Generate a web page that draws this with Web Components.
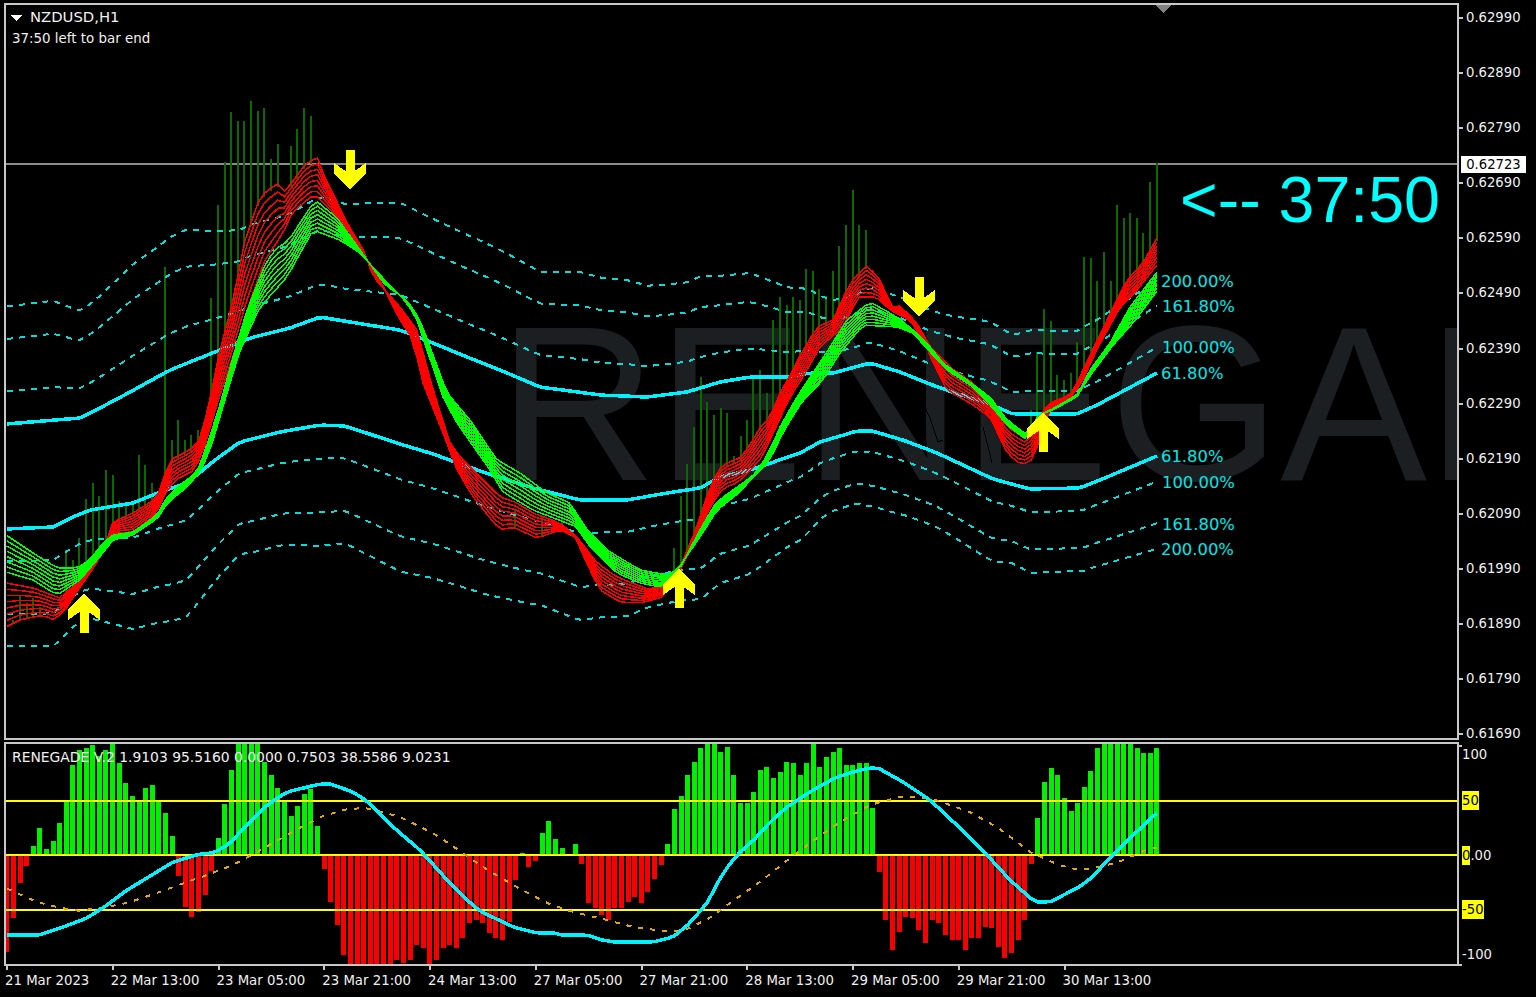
<!DOCTYPE html>
<html>
<head>
<meta charset="utf-8">
<title>NZDUSD,H1</title>
<style>
   html, body { margin: 0; background: #000; }
</style>
</head>
<body>
<mt-terminal>
   <chart-pane slot="main" ox="6" oy="5">
      <chart-text x="498" y="404" size="220" color="#1c1f22" font="'Liberation Sans'">RENEGADE</chart-text>
      <price-chart></price-chart>
      <chart-text x="30" y="17" size="14.8">NZDUSD,H1</chart-text>
      <chart-text x="12" y="39" size="13.4">37:50 left to bar end</chart-text>
      <chart-text x="1180" y="200" size="64.5" color="#00ffff" font="'Liberation Sans'">&lt;-- 37:50</chart-text>
      <chart-text x="1161" y="282" color="#00e8e8" size="16.4">200.00%</chart-text>
      <chart-text x="1162" y="307" color="#00e8e8" size="16.4">161.80%</chart-text>
      <chart-text x="1162" y="348" color="#00e8e8" size="16.4">100.00%</chart-text>
      <chart-text x="1161" y="374" color="#00e8e8" size="16.4">61.80%</chart-text>
      <chart-text x="1161" y="457" color="#00e8e8" size="16.4">61.80%</chart-text>
      <chart-text x="1162" y="483" color="#00e8e8" size="16.4">100.00%</chart-text>
      <chart-text x="1162" y="525" color="#00e8e8" size="16.4">161.80%</chart-text>
      <chart-text x="1161" y="550" color="#00e8e8" size="16.4">200.00%</chart-text>
   </chart-pane>

   <price-scale slot="price">
      <scale-tick>0.62990</scale-tick>
      <scale-tick>0.62890</scale-tick>
      <scale-tick>0.62790</scale-tick>
      <scale-tick>0.62690</scale-tick>
      <scale-tick>0.62590</scale-tick>
      <scale-tick>0.62490</scale-tick>
      <scale-tick>0.62390</scale-tick>
      <scale-tick>0.62290</scale-tick>
      <scale-tick>0.62190</scale-tick>
      <scale-tick>0.62090</scale-tick>
      <scale-tick>0.61990</scale-tick>
      <scale-tick>0.61890</scale-tick>
      <scale-tick>0.61790</scale-tick>
      <scale-tick>0.61690</scale-tick>
      <price-tag slot="tag">0.62723</price-tag>
   </price-scale>

   <chart-pane slot="sub" ox="6" oy="744">
      <osc-chart></osc-chart>
      <chart-text x="12" y="758" size="13.9">RENEGADE V.2 1.9103 95.5160 0.0000 0.7503 38.5586 9.0231</chart-text>
   </chart-pane>

   <osc-scale slot="osc">
      <osc-level>100</osc-level>
      <osc-level mark>50</osc-level>
      <osc-level tick><osc-mark>0</osc-mark>.00</osc-level>
      <osc-level mark>-50</osc-level>
      <osc-level>-100</osc-level>
   </osc-scale>

   <time-scale slot="time">
      <time-tick>21 Mar 2023</time-tick>
      <time-tick>22 Mar 13:00</time-tick>
      <time-tick>23 Mar 05:00</time-tick>
      <time-tick>23 Mar 21:00</time-tick>
      <time-tick>24 Mar 13:00</time-tick>
      <time-tick>27 Mar 05:00</time-tick>
      <time-tick>27 Mar 21:00</time-tick>
      <time-tick>28 Mar 13:00</time-tick>
      <time-tick>29 Mar 05:00</time-tick>
      <time-tick>29 Mar 21:00</time-tick>
      <time-tick>30 Mar 13:00</time-tick>
   </time-scale>
</mt-terminal>

<script>
const UI_FONT = `"DejaVu Sans", "Liberation Sans", sans-serif`
const BAR = 6.61
const BAR0 = 6.8

// picks one y from a list of [x, y] points read off the chart
function lerp(points, x){
   if(x <= points[0][0]) return points[0][1]
   for(let i = 1; i < points.length; i++){
      if(x <= points[i][0]){
         const a = points[i - 1], b = points[i]
         return a[1] + (b[1] - a[1]) * (x - a[0]) / (b[0] - a[0])
      }
   }
   return points[points.length - 1][1]
}

function polyline(fn, color, width, extra = ""){
   const pts = []
   for(let i = 0; i <= 174; i++){
      const x = BAR0 + i * BAR
      pts.push(`${x.toFixed(1)},${fn(x).toFixed(1)}`)
   }
   return `<polyline points="${pts.join(" ")}" fill="none" stroke="${color}" stroke-width="${width}" ${extra}/>`
}

function ribbon(top, bottom, color, count){
   let out = ""
   for(let n = 0; n < count; n++){
      const t = n / (count - 1)
      out += polyline(x => lerp(top, x) + (lerp(bottom, x) - lerp(top, x)) * t, color, 1.5)
   }
   return out
}

function arrow(cx, tip, dir){
   const p = [[0, 0], [16, 17], [16, 27], [4.5, 19], [4.5, 40], [-4.5, 40], [-4.5, 19], [-16, 27], [-16, 17]]
   return `<polygon fill="#ffff00" points="${p.map(a => `${cx + a[0]},${tip + a[1] * dir}`).join(" ")}"/>`
}

const UPPER = [[6,424],[80,418],[100,408],[130,392],[170,370],[215,352],[250,338],[290,328],[320,317],[350,322],[400,330],[433,343],[467,357],[500,370],[540,387],[600,395],[647,397],[687,392],[720,382],[750,377],[790,377],[810,373],[833,373],[870,363],[900,372],[927,383],[955,393],[987,403],[1013,414],[1077,414],[1097,405],[1157,373]]
const LOWER = [[6,529],[53,527],[73,517],[90,510],[133,503],[160,492],[187,483],[215,460],[240,442],[280,432],[320,425],[345,426],[400,444],[433,454],[483,472],[533,488],[580,500],[627,500],[667,493],[700,488],[720,477],[750,470],[800,453],[820,442],[857,431],[872,431],[903,440],[937,453],[993,479],[1030,489],[1080,488],[1107,477],[1157,456]]

const RED_TOP = [[6,583],[33,588],[60,598],[80,580],[97,560],[107,540],[113,522],[133,513],[157,498],[163,480],[170,460],[190,450],[200,440],[210,400],[220,350],[232,305],[245,240],[260,197],[277,183],[285,192],[307,162],[318,158],[323,173],[347,223],[365,253],[373,277],[385,290],[400,307],[417,330],[433,390],[450,443],[460,457],[483,480],[500,497],[515,502],[533,513],[560,523],[577,537],[597,563],[617,577],[650,590],[663,583],[680,567],[693,537],[700,517],[710,487],[718,470],[727,463],[740,458],[748,448],[760,428],[770,417],[780,393],[793,370],[800,356],[817,327],[833,320],[850,283],[867,265],[880,280],[892,307],[900,306],[917,323],[930,347],[950,367],[973,383],[992,403],[1007,427],[1027,440],[1040,417],[1043,410],[1050,403],[1063,398],[1073,392],[1083,370],[1107,320],[1127,280],[1143,263],[1157,238]]
const RED_BOT = [[6,627],[20,620],[43,615],[52,620],[63,613],[80,587],[97,563],[107,543],[113,533],[133,532],[157,513],[163,497],[175,480],[195,470],[205,445],[220,395],[235,350],[248,307],[265,260],[283,233],[292,213],[310,197],[318,197],[337,217],[350,233],[365,257],[380,280],[400,320],[413,340],[423,383],[443,433],[457,470],[473,497],[500,530],[513,527],[537,538],[560,530],[575,537],[590,570],[600,590],[620,602],[640,603],[663,597],[680,570],[697,537],[710,507],[723,488],[737,483],[748,473],[762,457],[770,440],[780,418],[790,397],[803,377],[820,347],[843,327],[858,297],[877,297],[890,310],[910,320],[927,347],[933,363],[947,390],[970,403],[990,417],[1007,453],[1020,464],[1030,463],[1040,440],[1047,412],[1073,395],[1082,383],[1095,353],[1120,307],[1137,290],[1157,265]]
const GREEN_TOP = [[6,535],[33,553],[57,568],[77,568],[90,560],[103,543],[113,535],[133,532],[157,515],[167,497],[180,485],[197,472],[207,445],[220,405],[235,350],[247,310],[267,260],[280,245],[287,243],[315,200],[337,218],[365,257],[385,285],[407,300],[420,320],[447,393],[470,420],[497,460],[520,473],[547,493],[570,503],[587,530],[607,550],[640,570],[667,575],[680,568],[700,530],[713,507],[723,497],[743,483],[757,472],[770,450],[780,427],[797,397],[813,373],[827,352],[847,320],[870,302],[897,317],[913,330],[927,343],[943,363],[967,380],[990,397],[1007,420],[1027,435],[1040,413],[1047,412],[1077,395],[1090,370],[1110,343],[1130,307],[1157,272]]
const GREEN_BOT = [[6,572],[33,580],[57,595],[80,580],[97,560],[113,540],[133,535],[158,518],[167,503],[187,487],[200,472],[210,450],[225,400],[240,350],[260,307],[287,277],[313,230],[340,240],[360,253],[380,275],[407,303],[417,320],[443,397],[457,423],[490,470],[503,492],[533,510],[577,527],[587,543],[617,573],[640,583],[660,587],[677,570],[700,537],[717,510],[740,492],[753,477],[770,460],[783,432],[803,400],[823,380],[840,353],[863,325],[897,327],[913,333],[930,352],[947,370],[973,387],[992,407],[1007,425],[1027,440],[1040,413],[1047,413],[1077,397],[1087,380],[1113,345],[1133,323],[1157,291]]

// [x, top of the wick], the rest of the wick hides behind the ribbon
const WICKS = [[13,620],[20,595],[27,603],[33,598],[40,607],[66,550],[73,560],[79,538],[86,499],[93,483],[99,496],[106,470],[113,475],[119,501],[126,502],[133,503],[139,455],[145,465],[152,483],[165,267],[172,440],[178,420],[185,440],[191,435],[198,430],[211,298],[218,205],[225,162],[231,112],[238,121],[244,121],[251,101],[258,111],[264,108],[271,159],[278,144],[291,146],[297,129],[304,108],[311,116],[515,510],[542,517],[562,517],[674,548],[681,496],[687,464],[694,427],[701,377],[707,402],[714,415],[721,408],[727,413],[734,456],[741,436],[747,420],[753,377],[760,370],[767,393],[773,320],[780,297],[787,305],[793,297],[800,300],[806,269],[813,271],[819,289],[826,296],[833,271],[839,246],[846,225],[853,190],[859,225],[866,230],[1031,410],[1037,352],[1044,309],[1051,321],[1057,375],[1064,380],[1071,373],[1077,342],[1084,257],[1091,258],[1097,281],[1104,252],[1111,281],[1117,205],[1124,218],[1130,213],[1137,218],[1143,233],[1150,182],[1157,163]]

// bar ends, one per hour from the left, y in page pixels
const HIST = [952,918,883,866,846,828,849,841,823,800,765,750,748,745,756,750,743,763,783,796,800,788,785,801,813,836,876,907,917,912,895,871,838,804,770,743,743,743,743,762,775,788,800,816,806,794,789,826,869,902,925,955,965,965,965,965,965,965,965,960,963,960,945,948,965,960,948,945,948,938,923,920,923,933,938,940,922,880,853,867,861,833,821,839,848,855,844,864,903,908,915,920,908,908,902,897,903,892,879,865,844,809,796,775,762,748,743,743,752,747,775,803,803,792,770,767,778,772,762,763,775,763,743,767,757,752,748,765,765,763,763,808,872,920,950,932,917,918,930,943,920,923,935,940,940,950,938,938,927,928,947,958,953,940,920,864,818,782,768,775,798,811,803,787,771,748,743,743,743,743,743,748,753,753,748]

const OSC_CYAN = [[6,935],[39,935],[63,927],[87,918],[107,905],[127,890],[147,878],[173,862],[200,854],[213,853],[228,845],[247,825],[267,805],[287,792],[320,784],[330,784],[353,792],[367,801],[393,827],[420,850],[447,880],[467,900],[480,911],[513,927],[537,933],[555,933],[558,935],[587,935],[602,940],[615,942],[653,942],[673,937],[690,923],[707,903],[723,873],[737,855],[757,837],[770,822],[787,807],[813,790],[837,777],[860,770],[870,768],[878,768],[903,782],[930,800],[960,828],[987,855],[1010,880],[1035,902],[1050,902],[1079,887],[1089,880],[1114,854],[1156,813]]
const OSC_SIGNAL = [[6,888],[17,893],[37,902],[57,907],[77,911],[100,908],[127,903],[157,893],[187,882],[207,875],[233,865],[257,852],[287,835],[320,817],[347,809],[367,808],[400,817],[433,833],[463,853],[483,867],[513,885],[547,903],[573,912],[603,919],[633,927],[663,931],[683,931],[710,918],[730,903],[760,882],[790,858],[810,843],[840,822],[870,805],[900,797],[930,798],[970,812],[1000,829],[1030,852],[1059,865],[1079,870],[1099,867],[1119,862],[1139,853],[1151,848]]

const chartStyle = `
   :host { display: block; position: relative; width: 100%; height: 100%; }
   svg { display: block; width: 100%; height: 100%; }
   svg * { shape-rendering: crispEdges; }
`

class MtTerminal extends HTMLElement {
   constructor(){
      super()
      this.attachShadow({ mode: "open" }).innerHTML = `
         <style>
            :host {
               display: grid;
               box-sizing: border-box;
               width: 1536px;
               height: 997px;
               padding: 3px 0 0 4px;
               grid-template-columns: 1455px 1fr;
               grid-template-rows: 737px 224px 1fr;
               row-gap: 2px;
               background: #000;
               color: #f0f0f0;
               font-family: ${UI_FONT};
            }
         </style>
         <slot name="main"></slot><slot name="price"></slot>
         <slot name="sub"></slot><slot name="osc"></slot>
         <slot name="time"></slot>
      `
   }
}
customElements.define("mt-terminal", MtTerminal)

class ChartPane extends HTMLElement {
   constructor(){
      super()
      this.attachShadow({ mode: "open" }).innerHTML = `
         <style>
            :host {
               display: block;
               position: relative;
               box-sizing: border-box;
               border: 2px solid #c8c8c8;
               background: #000;
               overflow: hidden;
            }
         </style>
         <slot></slot>
      `
   }
}
customElements.define("chart-pane", ChartPane)

// a label on the chart: x and y are page pixels, y is the middle of the line
class ChartText extends HTMLElement {
   constructor(){
      super()
      this.attachShadow({ mode: "open" }).innerHTML = `
         <style>
            :host {
               position: absolute;
               white-space: nowrap;
               line-height: 1;
               transform: translateY(-50%);
            }
         </style>
         <slot></slot>
      `
   }
   connectedCallback(){
      const pane = this.closest("chart-pane")
      this.style.left = (this.getAttribute("x") - pane.getAttribute("ox")) + "px"
      this.style.top = (this.getAttribute("y") - pane.getAttribute("oy")) + "px"
      this.style.fontSize = (this.getAttribute("size") || 13) + "px"
      if(this.hasAttribute("color")) this.style.color = this.getAttribute("color")
      if(this.hasAttribute("font")) this.style.fontFamily = this.getAttribute("font") + ", sans-serif"
   }
}
customElements.define("chart-text", ChartText)

class PriceChart extends HTMLElement {
   constructor(){
      super()
      const center = x => (lerp(UPPER, x) + lerp(LOWER, x)) / 2
      const spread = x => (lerp(LOWER, x) - lerp(UPPER, x)) / 2 / 0.618
      let bands = ""
      for(const k of [2, 1.618, 1]){
         const dash = `stroke-dasharray="6 6"`
         bands += polyline(x => center(x) - spread(x) * k, "#00dede", 2, dash)
         bands += polyline(x => center(x) + spread(x) * k, "#00dede", 2, dash)
      }
      const wicks = WICKS.map(([x, top]) => {
         const end = x < 60 || (x > 500 && x < 600) ? lerp(RED_BOT, x) : lerp(RED_TOP, x) + 3
         return `<rect x="${x - 1}" y="${top}" width="2" height="${Math.max(0, end - top)}" fill="#0a6a00"/>`
      }).join("")

      this.attachShadow({ mode: "open" }).innerHTML = `
         <style>${chartStyle}</style>
         <svg viewBox="6 5 1451 733">
            <rect x="6" y="163" width="1451" height="2" fill="#8c8c8c"/>
            <polygon points="1156,5 1171,5 1163.5,13" fill="#808080"/>
            <polygon points="11,15 22,15 16.5,21" fill="#fff"/>
            <polyline points="923,403 930,418 938,442 943,440" fill="none" stroke="#000" stroke-width="1"/>
            <polyline points="983,427 992,463" fill="none" stroke="#000" stroke-width="1"/>
            ${wicks}
            ${bands}
            ${polyline(x => lerp(UPPER, x), "#00f2ff", 3.5)}
            ${polyline(x => lerp(LOWER, x), "#00f2ff", 3.5)}
            ${ribbon(RED_TOP, RED_BOT, "#ff0000", 8)}
            ${ribbon(GREEN_TOP, GREEN_BOT, "#00ff00", 8)}
            ${arrow(350, 190, -1)}
            ${arrow(919, 317, -1)}
            ${arrow(84, 593, 1)}
            ${arrow(679, 568, 1)}
            ${arrow(1043, 412, 1)}
         </svg>
      `
   }
}
customElements.define("price-chart", PriceChart)

class OscChart extends HTMLElement {
   constructor(){
      super()
      const zero = 855
      const bars = HIST.map((y, i) => {
         if(y === zero) return ""
         const x = Math.round(BAR0 + i * BAR - 2.5)
         return y < zero
            ? `<rect x="${x}" y="${y}" width="5" height="${zero - y}" fill="#00f000"/>`
            : `<rect x="${x}" y="${zero}" width="5" height="${y - zero}" fill="#f80000"/>`
      }).join("")
      const level = (y, h) => `<rect x="6" y="${y}" width="1451" height="${h}" fill="#ffff00"/>`

      this.attachShadow({ mode: "open" }).innerHTML = `
         <style>${chartStyle}</style>
         <svg viewBox="6 744 1451 220">
            ${bars}
            ${level(800, 1.5)}
            ${level(854, 2)}
            ${level(909, 1.5)}
            ${polyline(x => lerp(OSC_SIGNAL, x), "#e0a800", 2, `stroke-dasharray="5 7"`)}
            ${polyline(x => x > 1156 ? 813 : lerp(OSC_CYAN, x), "#00f2ff", 3.5)}
         </svg>
      `
   }
}
customElements.define("osc-chart", OscChart)

class PriceScale extends HTMLElement {
   constructor(){
      super()
      this.attachShadow({ mode: "open" }).innerHTML = `
         <style>
            :host {
               display: block;
               position: relative;
               padding-top: 7px;
               height: 100%;
               box-sizing: border-box;
            }
         </style>
         <slot></slot>
         <slot name="tag"></slot>
      `
   }
}
customElements.define("price-scale", PriceScale)

class ScaleTick extends HTMLElement {
   constructor(){
      super()
      this.attachShadow({ mode: "open" }).innerHTML = `
         <style>
            :host {
               display: flex;
               align-items: flex-start;
               height: 55.1px;
               font-size: 13.2px;
               line-height: 16px;
            }
            :host(:last-of-type) { height: 16px; }
            i {
               flex: none;
               width: 4px;
               height: 2px;
               margin: 7px 3px 0 0;
               background: #c8c8c8;
            }
         </style>
         <i></i><slot></slot>
      `
   }
}
customElements.define("scale-tick", ScaleTick)

class PriceTag extends HTMLElement {
   constructor(){
      super()
      this.attachShadow({ mode: "open" }).innerHTML = `
         <style>
            :host {
               position: absolute;
               left: 2px;
               top: 153px;
               width: 65px;
               height: 17px;
               background: #fff;
               color: #000;
               font-size: 13.2px;
               line-height: 17px;
               text-align: center;
            }
         </style>
         <slot></slot>
      `
   }
}
customElements.define("price-tag", PriceTag)

class OscScale extends HTMLElement {
   constructor(){
      super()
      this.attachShadow({ mode: "open" }).innerHTML = `
         <style>
            :host {
               display: grid;
               position: relative;
               grid-template-rows: 24px 68px 42px 66px 24px;
               align-items: center;
               padding-left: 3px;
               font-size: 13.2px;
            }
            i { position: absolute; left: 0; width: 3px; height: 2px; background: #c8c8c8; }
         </style>
         <i style="top: 3px"></i>
         <slot></slot>
         <i style="bottom: 0"></i>
      `
   }
}
customElements.define("osc-scale", OscScale)

class OscLevel extends HTMLElement {
   constructor(){
      super()
      this.attachShadow({ mode: "open" }).innerHTML = `
         <style>
            :host { display: block; line-height: 19px; white-space: nowrap; }
            :host([mark]) span { background: #ffff00; color: #000; }
            span { display: inline-block; }
         </style>
         <span><slot></slot></span>
      `
   }
}
customElements.define("osc-level", OscLevel)

class OscMark extends HTMLElement {
   constructor(){
      super()
      this.attachShadow({ mode: "open" }).innerHTML = `
         <style>
            :host { display: inline-block; background: #ffff00; color: #000; }
         </style>
         <slot></slot>
      `
   }
}
customElements.define("osc-mark", OscMark)

class TimeScale extends HTMLElement {
   constructor(){
      super()
      this.attachShadow({ mode: "open" }).innerHTML = `
         <style>
            :host {
               display: flex;
               grid-column: 1 / -1;
               padding-left: 2px;
               margin-top: -2px;
            }
         </style>
         <slot></slot>
      `
   }
}
customElements.define("time-scale", TimeScale)

class TimeTick extends HTMLElement {
   constructor(){
      super()
      this.attachShadow({ mode: "open" }).innerHTML = `
         <style>
            :host {
               display: block;
               flex: none;
               width: 105.76px;
               font-size: 13.3px;
               white-space: nowrap;
            }
            i { display: block; width: 2px; height: 4px; background: #c8c8c8; }
            span { display: block; margin-left: -1px; line-height: 22px; }
         </style>
         <i></i><span><slot></slot></span>
      `
   }
}
customElements.define("time-tick", TimeTick)
</script>
</body>
</html>
